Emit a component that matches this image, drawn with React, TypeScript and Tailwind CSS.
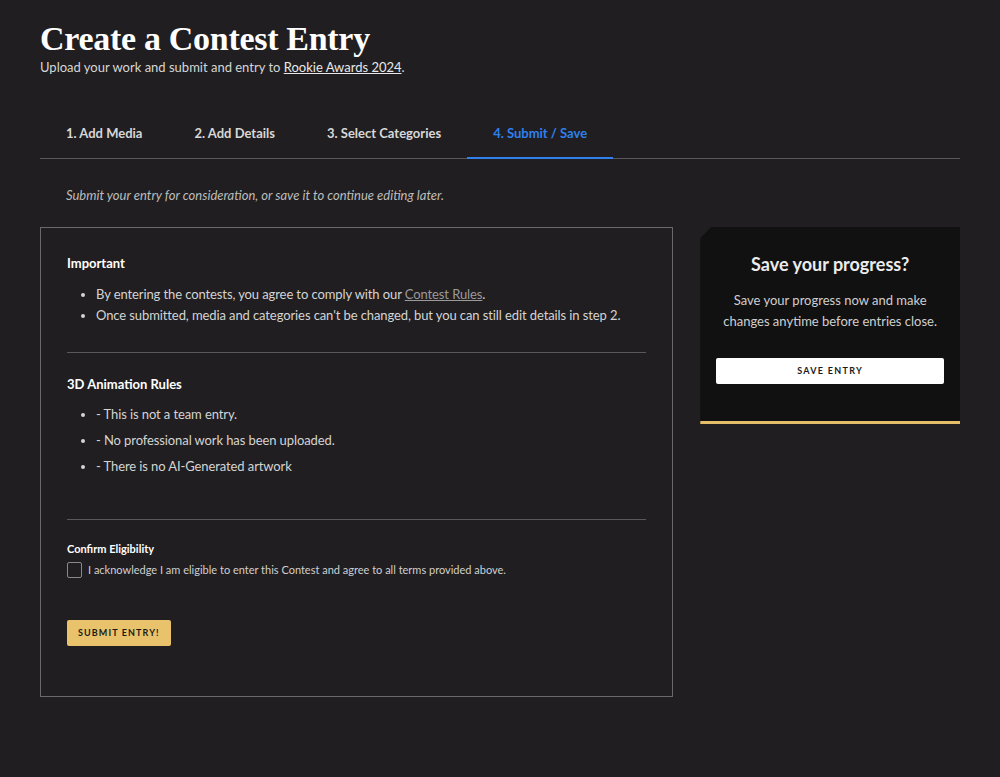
export default function App() {
  const tabs = ['1. Add Media', '2. Add Details', '3. Select Categories', '4. Submit / Save']
  const active = 3

  return (
    <div className="min-h-screen w-full bg-[#201e20] text-[#e4e4e4] font-['Lato',sans-serif]">
      <div className="px-10 pt-[20px]">
        {/* Header */}
        <h1 className="font-['Liberation_Serif',serif] text-[34px] leading-[38px] font-bold text-white tracking-[-0.3px]">
          Create a Contest Entry
        </h1>
        <p className="text-[13px] leading-[16px] text-[#d6d6d6] mt-[1px]">
          Upload your work and submit and entry to{' '}
          <a className="underline text-[#e8e8e8]">Rookie Awards 2024</a>.
        </p>

        {/* Tabs */}
        <div className="mt-[50px] flex border-b border-[#5a585a]">
          {tabs.map((t, i) => (
            <div
              key={t}
              className={`px-[26px] pb-[16px] text-[13px] leading-[16px] font-bold -mb-px border-b-2 ${
                i === active ? 'text-[#2f80ed] border-[#2f80ed]' : 'text-[#d8d8d8] border-transparent'
              }`}
            >
              {t}
            </div>
          ))}
        </div>

        <p className="mt-[28px] pl-[26px] text-[13px] leading-[16px] italic text-[#bdbdbd]">
          Submit your entry for consideration, or save it to continue editing later.
        </p>

        {/* Main */}
        <div className="mt-[24px] flex items-start gap-[27px]">
          <div className="w-[634px] h-[470px] border border-[#6a686a] px-[26px] pt-[27px]">
            <h2 className="text-[13px] leading-[16px] font-bold text-white">Important</h2>
            <ul className="mt-[13px] pl-[29px] list-disc text-[13px] leading-[21px] tracking-[-0.1px] text-[#d4d4d4] marker:text-[#d4d4d4]">
              <li>
                By entering the contests, you agree to comply with our{' '}
                <a className="underline text-[#9a9a9a]">Contest Rules</a>.
              </li>
              <li>Once submitted, media and categories can't be changed, but you can still edit details in step 2.</li>
            </ul>

            <hr className="mt-[26px] border-t border-[#5a585a]" />

            <h2 className="mt-[23px] text-[13px] leading-[16px] font-bold text-white">3D Animation Rules</h2>
            <ul className="mt-[12px] pl-[29px] list-disc text-[13px] leading-[21px] tracking-[-0.1px] text-[#d4d4d4] flex flex-col gap-[5px]">
              <li>- This is not a team entry.</li>
              <li>- No professional work has been uploaded.</li>
              <li>- There is no AI-Generated artwork</li>
            </ul>

            <hr className="mt-[42px] border-t border-[#5a585a]" />

            <h3 className="mt-[22px] text-[11px] leading-[14px] font-bold text-white">Confirm Eligibility</h3>
            <label className="mt-[6px] flex items-center gap-[6px] text-[11px] leading-[14px] text-[#d0d0d0]">
              <span className="w-[15px] h-[16px] border border-[#8a888a] rounded-[2px] shrink-0" />
              I acknowledge I am eligible to enter this Contest and agree to all terms provided above.
            </label>

            <button className="mt-[42px] h-[26px] px-[11px] bg-[#e8c36c] rounded-[2px] text-[9px] font-bold tracking-[1.1px] text-[#1e1b16]">
              SUBMIT ENTRY!
            </button>
          </div>

          {/* Save card */}
          <div className="w-[260px] bg-[#121112] [clip-path:polygon(11px_0,100%_0,100%_100%,0_100%,0_11px)] border-b-[3px] border-[#e4bd68] px-[16px] pt-[25px] pb-[37px] text-center">
            <h2 className="text-[18px] leading-[24px] font-bold text-[#ececec]">Save your progress?</h2>
            <p className="mt-[14px] text-[13px] leading-[21px] text-[#cfcfcf]">
              Save your progress now and make changes anytime before entries close.
            </p>
            <button className="mt-[26px] w-full h-[26px] bg-white rounded-[2px] text-[9px] font-bold tracking-[1.3px] text-[#1a1a1a]">
              SAVE ENTRY
            </button>
          </div>
        </div>
      </div>
    </div>
  )
}
